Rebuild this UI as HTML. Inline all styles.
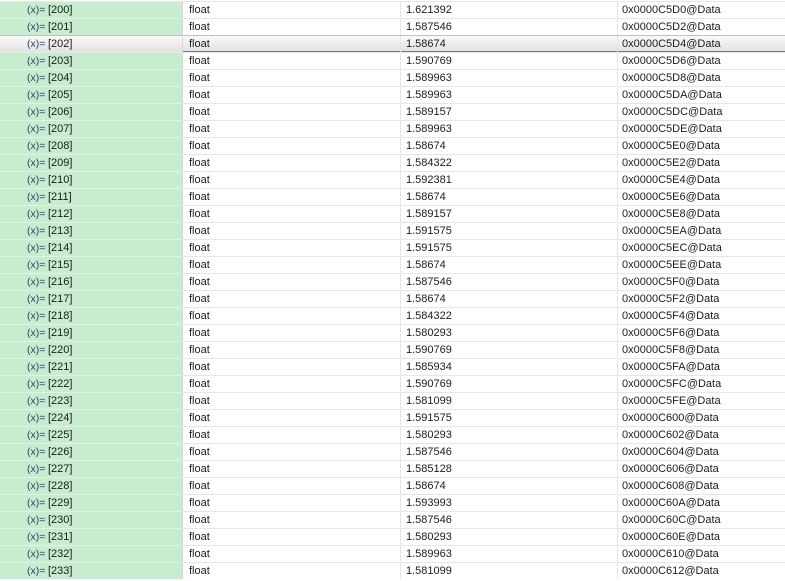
<!DOCTYPE html>
<html><head><style>
body{margin:0;width:785px;height:581px;overflow:hidden;background:#fff;font-family:Tahoma,"Liberation Sans",sans-serif;font-size:11px;color:#1c1c1c;}
.wrap{position:absolute;top:1px;left:0;width:785px;}
.r{position:relative;height:16px;border-top:1px solid #e6e6e6;}
.c0{position:absolute;left:0;top:-1px;width:183px;height:17px;background:#c7ecd0;border-top:1px solid #e2f3e6;box-sizing:border-box;border-right:1px solid #d8d8d8;}
.r span{position:absolute;top:1px;line-height:14px;white-space:nowrap;}
.ic{left:27px;color:#34426f;font-size:10.5px;}
.ix{left:48px;}
.t{left:189px;}.v{left:406px;}.a{left:622px;}
.l1{position:absolute;left:400px;top:0;width:1px;height:16px;background:#e6e6e6;}
.l2{position:absolute;left:617px;top:0;width:1px;height:16px;background:#e6e6e6;}
.sel{border-top:1px solid #c0c0c0;}
.sel .c0,.sel .bg{background:linear-gradient(#fafafa,#e2e2e2);}
.sel .c0{border-top:none;top:0;height:16px;}
.sel .bg{position:absolute;left:0;top:0;width:785px;height:15px;border-bottom:1px solid #7a7a7a;}
</style></head><body><div class="wrap">
<script>
const v=["1.621392","1.587546","1.58674","1.590769","1.589963","1.589963","1.589157","1.589963","1.58674","1.584322","1.592381","1.58674","1.589157","1.591575","1.591575","1.58674","1.587546","1.58674","1.584322","1.580293","1.590769","1.585934","1.590769","1.581099","1.591575","1.580293","1.587546","1.585128","1.58674","1.593993","1.587546","1.580293","1.589963","1.581099"];
let h="";
for(let i=0;i<34;i++){const a=(0xC5D0+2*i).toString(16).toUpperCase();
const s=i==2;
h+=`<div class="r${s?' sel':''}">${s?'<div class="bg"></div>':''}<div class="c0"></div><div class="l1"></div><div class="l2"></div><span class="ic">(x)=</span><span class="ix">[${200+i}]</span><span class="t">float</span><span class="v">${v[i]}</span><span class="a">0x0000${a}@Data</span></div>`;}
document.write(h);
</script>
</div></body></html>
